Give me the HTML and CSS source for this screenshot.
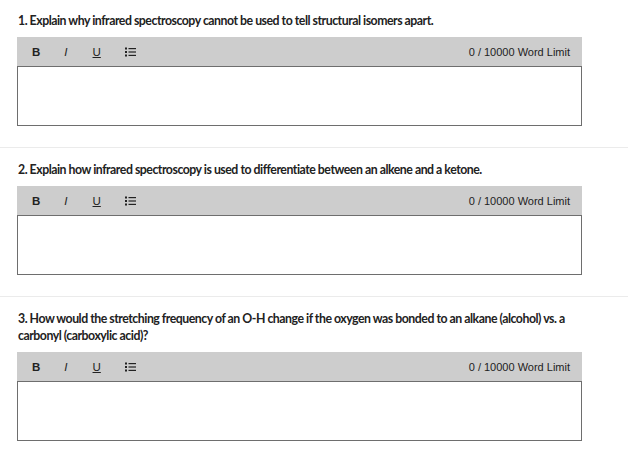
FILE: index.html
```html
<!DOCTYPE html>
<html>
<head>
<meta charset="utf-8">
<link rel="stylesheet" href="styles.css">
</head>
<body>
<div class="page">
  <section class="question first">
    <p class="prompt">1. Explain why infrared spectroscopy cannot be used to tell structural isomers apart.</p>
    <div class="editor">
      <div class="toolbar">
        <span class="tool bold">B</span>
        <span class="tool italic">I</span>
        <span class="tool under">U</span>
        <span class="tool list"><svg width="11" height="10" viewBox="0 0 11 10"><rect x="0" y="0.5" width="2" height="2" fill="#222"/><rect x="0" y="4" width="2" height="2" fill="#222"/><rect x="0" y="7.5" width="2" height="2" fill="#222"/><rect x="3.5" y="1" width="7.5" height="1.2" fill="#222"/><rect x="3.5" y="4.4" width="7.5" height="1.2" fill="#222"/><rect x="3.5" y="7.8" width="7.5" height="1.2" fill="#222"/></svg></span>
        <span class="limit">0 / 10000 Word Limit</span>
      </div>
      <div class="area"></div>
    </div>
  </section>
  <section class="question">
    <p class="prompt">2. Explain how infrared spectroscopy is used to differentiate between an alkene and a ketone.</p>
    <div class="editor">
      <div class="toolbar">
        <span class="tool bold">B</span>
        <span class="tool italic">I</span>
        <span class="tool under">U</span>
        <span class="tool list"><svg width="11" height="10" viewBox="0 0 11 10"><rect x="0" y="0.5" width="2" height="2" fill="#222"/><rect x="0" y="4" width="2" height="2" fill="#222"/><rect x="0" y="7.5" width="2" height="2" fill="#222"/><rect x="3.5" y="1" width="7.5" height="1.2" fill="#222"/><rect x="3.5" y="4.4" width="7.5" height="1.2" fill="#222"/><rect x="3.5" y="7.8" width="7.5" height="1.2" fill="#222"/></svg></span>
        <span class="limit">0 / 10000 Word Limit</span>
      </div>
      <div class="area"></div>
    </div>
  </section>
  <section class="question">
    <p class="prompt">3. How would the stretching frequency of an O-H change if the oxygen was bonded to an alkane (alcohol) vs. a carbonyl (carboxylic acid)?</p>
    <div class="editor">
      <div class="toolbar">
        <span class="tool bold">B</span>
        <span class="tool italic">I</span>
        <span class="tool under">U</span>
        <span class="tool list"><svg width="11" height="10" viewBox="0 0 11 10"><rect x="0" y="0.5" width="2" height="2" fill="#222"/><rect x="0" y="4" width="2" height="2" fill="#222"/><rect x="0" y="7.5" width="2" height="2" fill="#222"/><rect x="3.5" y="1" width="7.5" height="1.2" fill="#222"/><rect x="3.5" y="4.4" width="7.5" height="1.2" fill="#222"/><rect x="3.5" y="7.8" width="7.5" height="1.2" fill="#222"/></svg></span>
        <span class="limit">0 / 10000 Word Limit</span>
      </div>
      <div class="area"></div>
    </div>
  </section>
</div>
</body>
</html>
```
FILE: styles.css
```css
html, body {
  margin: 0;
  padding: 0;
  background: #fff;
}
.page {
  width: 628px;
}
.question {
  padding: 13px 0 21px;
  border-top: 1px solid #ebebeb;
}
.question.first {
  padding-top: 12px;
  border-top: none;
}
.prompt {
  margin: 0 0 8px 18px;
  padding-right: 40px;
  font-family: Lato, "Noto Sans", sans-serif;
  font-weight: 700;
  font-size: 12.3px;
  line-height: 17px;
  letter-spacing: -0.48px;
  color: #222;
}
.editor {
  margin-left: 17px;
  width: 565px;
}
.toolbar {
  height: 29px;
  background: #cdcdcd;
  display: flex;
  align-items: center;
  font-family: "Liberation Sans", Arial, sans-serif;
  color: #222;
}
.tool {
  font-size: 11.5px;
  display: inline-flex;
  align-items: center;
}
.bold { font-weight: 700; margin-left: 15px; }
.italic { font-style: italic; margin-left: 24px; }
.under { text-decoration: underline; margin-left: 25px; }
.list { margin-left: 24px; }
.limit {
  margin-left: auto;
  margin-right: 12px;
  font-size: 11px;
  color: #222;
}
.area {
  height: 58px;
  border: 1px solid #6e6e6e;
  background: #fff;
}
```
